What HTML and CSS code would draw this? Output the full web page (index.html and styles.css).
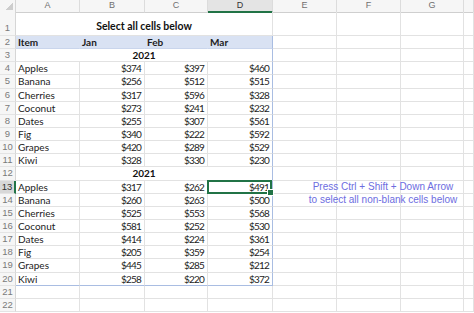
FILE: index.html
```html
<!DOCTYPE html>
<html lang="en">
<head>
  <meta charset="UTF-8" />
  <title>Select all cells below</title>
  <link rel="stylesheet" href="styles.css">
</head>
<body>
  <div class="sheet">
    <div class="row col-heads">
      <div class="corner"></div>
      <div class="ch">A</div>
      <div class="ch">B</div>
      <div class="ch">C</div>
      <div class="ch active">D</div>
      <div class="ch">E</div>
      <div class="ch">F</div>
      <div class="ch">G</div>
      <div class="ch"></div>
    </div>

    <div class="row title-row">
      <div class="rh">1</div>
      <div class="cell merged title">Select all cells below</div>
      <div class="cell"></div><div class="cell"></div><div class="cell"></div><div class="cell"></div>
    </div>

    <div class="row head-row">
      <div class="rh">2</div>
      <div class="cell band">Item</div>
      <div class="cell band">Jan</div>
      <div class="cell band">Feb</div>
      <div class="cell band edge">Mar</div>
      <div class="cell"></div><div class="cell"></div><div class="cell"></div><div class="cell"></div>
    </div>

    <div class="row">
      <div class="rh">3</div>
      <div class="cell merged year edge">2021</div>
      <div class="cell"></div><div class="cell"></div><div class="cell"></div><div class="cell"></div>
    </div>

    <div class="row">
      <div class="rh">4</div>
      <div class="cell">Apples</div><div class="cell num">$374</div><div class="cell num">$397</div><div class="cell num edge">$460</div>
      <div class="cell"></div><div class="cell"></div><div class="cell"></div><div class="cell"></div>
    </div>
    <div class="row">
      <div class="rh">5</div>
      <div class="cell">Banana</div><div class="cell num">$256</div><div class="cell num">$512</div><div class="cell num edge">$515</div>
      <div class="cell"></div><div class="cell"></div><div class="cell"></div><div class="cell"></div>
    </div>
    <div class="row">
      <div class="rh">6</div>
      <div class="cell">Cherries</div><div class="cell num">$317</div><div class="cell num">$596</div><div class="cell num edge">$328</div>
      <div class="cell"></div><div class="cell"></div><div class="cell"></div><div class="cell"></div>
    </div>
    <div class="row">
      <div class="rh">7</div>
      <div class="cell">Coconut</div><div class="cell num">$273</div><div class="cell num">$241</div><div class="cell num edge">$232</div>
      <div class="cell"></div><div class="cell"></div><div class="cell"></div><div class="cell"></div>
    </div>
    <div class="row">
      <div class="rh">8</div>
      <div class="cell">Dates</div><div class="cell num">$255</div><div class="cell num">$307</div><div class="cell num edge">$561</div>
      <div class="cell"></div><div class="cell"></div><div class="cell"></div><div class="cell"></div>
    </div>
    <div class="row">
      <div class="rh">9</div>
      <div class="cell">Fig</div><div class="cell num">$340</div><div class="cell num">$222</div><div class="cell num edge">$592</div>
      <div class="cell"></div><div class="cell"></div><div class="cell"></div><div class="cell"></div>
    </div>
    <div class="row">
      <div class="rh">10</div>
      <div class="cell">Grapes</div><div class="cell num">$420</div><div class="cell num">$289</div><div class="cell num edge">$529</div>
      <div class="cell"></div><div class="cell"></div><div class="cell"></div><div class="cell"></div>
    </div>
    <div class="row">
      <div class="rh">11</div>
      <div class="cell">Kiwi</div><div class="cell num">$328</div><div class="cell num">$330</div><div class="cell num edge">$230</div>
      <div class="cell"></div><div class="cell"></div><div class="cell"></div><div class="cell"></div>
    </div>

    <div class="row">
      <div class="rh">12</div>
      <div class="cell merged year edge">2021</div>
      <div class="cell"></div><div class="cell"></div><div class="cell"></div><div class="cell"></div>
    </div>

    <div class="row">
      <div class="rh current">13</div>
      <div class="cell">Apples</div><div class="cell num">$317</div><div class="cell num">$262</div>
      <div class="cell num edge selected">$491<span class="sel-box"></span></div>
      <div class="cell"></div><div class="cell"></div><div class="cell"></div><div class="cell"></div>
    </div>
    <div class="row">
      <div class="rh">14</div>
      <div class="cell">Banana</div><div class="cell num">$260</div><div class="cell num">$263</div><div class="cell num edge">$500</div>
      <div class="cell"></div><div class="cell"></div><div class="cell"></div><div class="cell"></div>
    </div>
    <div class="row">
      <div class="rh">15</div>
      <div class="cell">Cherries</div><div class="cell num">$525</div><div class="cell num">$553</div><div class="cell num edge">$568</div>
      <div class="cell"></div><div class="cell"></div><div class="cell"></div><div class="cell"></div>
    </div>
    <div class="row">
      <div class="rh">16</div>
      <div class="cell">Coconut</div><div class="cell num">$581</div><div class="cell num">$252</div><div class="cell num edge">$530</div>
      <div class="cell"></div><div class="cell"></div><div class="cell"></div><div class="cell"></div>
    </div>
    <div class="row">
      <div class="rh">17</div>
      <div class="cell">Dates</div><div class="cell num">$414</div><div class="cell num">$224</div><div class="cell num edge">$361</div>
      <div class="cell"></div><div class="cell"></div><div class="cell"></div><div class="cell"></div>
    </div>
    <div class="row">
      <div class="rh">18</div>
      <div class="cell">Fig</div><div class="cell num">$205</div><div class="cell num">$359</div><div class="cell num edge">$254</div>
      <div class="cell"></div><div class="cell"></div><div class="cell"></div><div class="cell"></div>
    </div>
    <div class="row">
      <div class="rh">19</div>
      <div class="cell">Grapes</div><div class="cell num">$445</div><div class="cell num">$285</div><div class="cell num edge">$212</div>
      <div class="cell"></div><div class="cell"></div><div class="cell"></div><div class="cell"></div>
    </div>
    <div class="row last-row">
      <div class="rh">20</div>
      <div class="cell">Kiwi</div><div class="cell num">$258</div><div class="cell num">$220</div><div class="cell num edge">$372</div>
      <div class="cell"></div><div class="cell"></div><div class="cell"></div><div class="cell"></div>
    </div>

    <div class="row">
      <div class="rh">21</div>
      <div class="cell"></div><div class="cell"></div><div class="cell"></div><div class="cell"></div>
      <div class="cell"></div><div class="cell"></div><div class="cell"></div><div class="cell"></div>
    </div>
    <div class="row">
      <div class="rh">22</div>
      <div class="cell"></div><div class="cell"></div><div class="cell"></div><div class="cell"></div>
      <div class="cell"></div><div class="cell"></div><div class="cell"></div><div class="cell"></div>
    </div>

    <!-- floating text box on the sheet -->
    <div class="note">Press Ctrl + Shift + Down Arrow<br>to select all non-blank cells below</div>
  </div>
</body>
</html>
```

FILE: styles.css
```css
* {
  margin: 0;
  padding: 0;
  box-sizing: border-box;
}
body {
  background: #fff;
  color: #222;
  font-family: 'Lato', 'Liberation Sans', sans-serif;
  overflow: hidden;
}
.sheet {
  position: relative;
  width: 474px;
}
.row {
  display: grid;
  grid-template-columns: 16px 64px 65px 63px 65px 64px 64px 63px 1fr;
  height: 13.15px;
  font-size: 10px;
}
.col-heads {
  height: 12px;
}
.title-row {
  height: 24px;
}

/* headers */
.corner {
  background: linear-gradient(135deg, transparent 50%, #cdcdcd 50%) no-repeat right 2px bottom 2px / 7px 7px, #f6f6f6;
  border-right: 1px solid #d6d6d6;
  border-bottom: 1px solid #cfcfcf;
}
.ch {
  background: #f6f6f6;
  border-right: 1px solid #dcdcdc;
  border-bottom: 1px solid #cfcfcf;
  color: #707070;
  font-family: 'Liberation Sans', sans-serif;
  font-size: 9px;
  line-height: 11px;
  text-align: center;
}
.ch.active {
  background: #e4e4e4;
  border-bottom: 2px solid #217346;
  color: #333;
}
.rh {
  background: #f6f6f6;
  border-right: 1px solid #d6d6d6;
  border-bottom: 1px solid #e4e4e4;
  color: #7a7a7a;
  font-family: 'Liberation Sans', sans-serif;
  font-size: 9.5px;
  line-height: 12px;
  text-align: center;
}
.rh.current {
  background: #d8d8d8;
  border-right: 2px solid #217346;
  color: #333;
}
.title-row .rh {
  display: flex;
  align-items: flex-end;
  justify-content: center;
  padding-bottom: 1px;
}

/* cells */
.cell {
  border-right: 1px solid #e2e2e2;
  border-bottom: 1px solid #e2e2e2;
  padding: 0 2px;
  line-height: 12px;
  white-space: nowrap;
}
.num {
  text-align: right;
  letter-spacing: -0.8px;
  padding-right: 3px;
}
.merged {
  grid-column: span 4;
  text-align: center;
  font-weight: bold;
}
.title {
  display: flex;
  align-items: flex-end;
  justify-content: center;
  padding-bottom: 3px;
  font-size: 10.5px;
  color: #111;
}
.year {
  color: #111;
}
.band {
  background: #d9e2f3;
  border-right-color: #d9e2f3;
  border-bottom-color: #c9d5ec;
  font-weight: bold;
  color: #1d1d1d;
}
.edge {
  border-right-color: #a9bde2;
}
.last-row .cell:nth-child(-n+5) {
  border-bottom-color: #a9bde2;
}

/* active cell */
.selected {
  position: relative;
}
.sel-box {
  position: absolute;
  top: -1px;
  left: -1px;
  right: 0;
  bottom: -1px;
  border: 2px solid #217346;
}
.sel-box::after {
  content: "";
  position: absolute;
  right: -4px;
  bottom: -4px;
  width: 5px;
  height: 5px;
  background: #217346;
  border: 1px solid #fff;
}

/* floating text box */
.note {
  position: absolute;
  left: 298px;
  top: 180px;
  width: 170px;
  font-family: 'Liberation Sans', Arial, sans-serif;
  font-size: 10px;
  line-height: 13px;
  text-align: center;
  color: #6d6ddf;
}
```
